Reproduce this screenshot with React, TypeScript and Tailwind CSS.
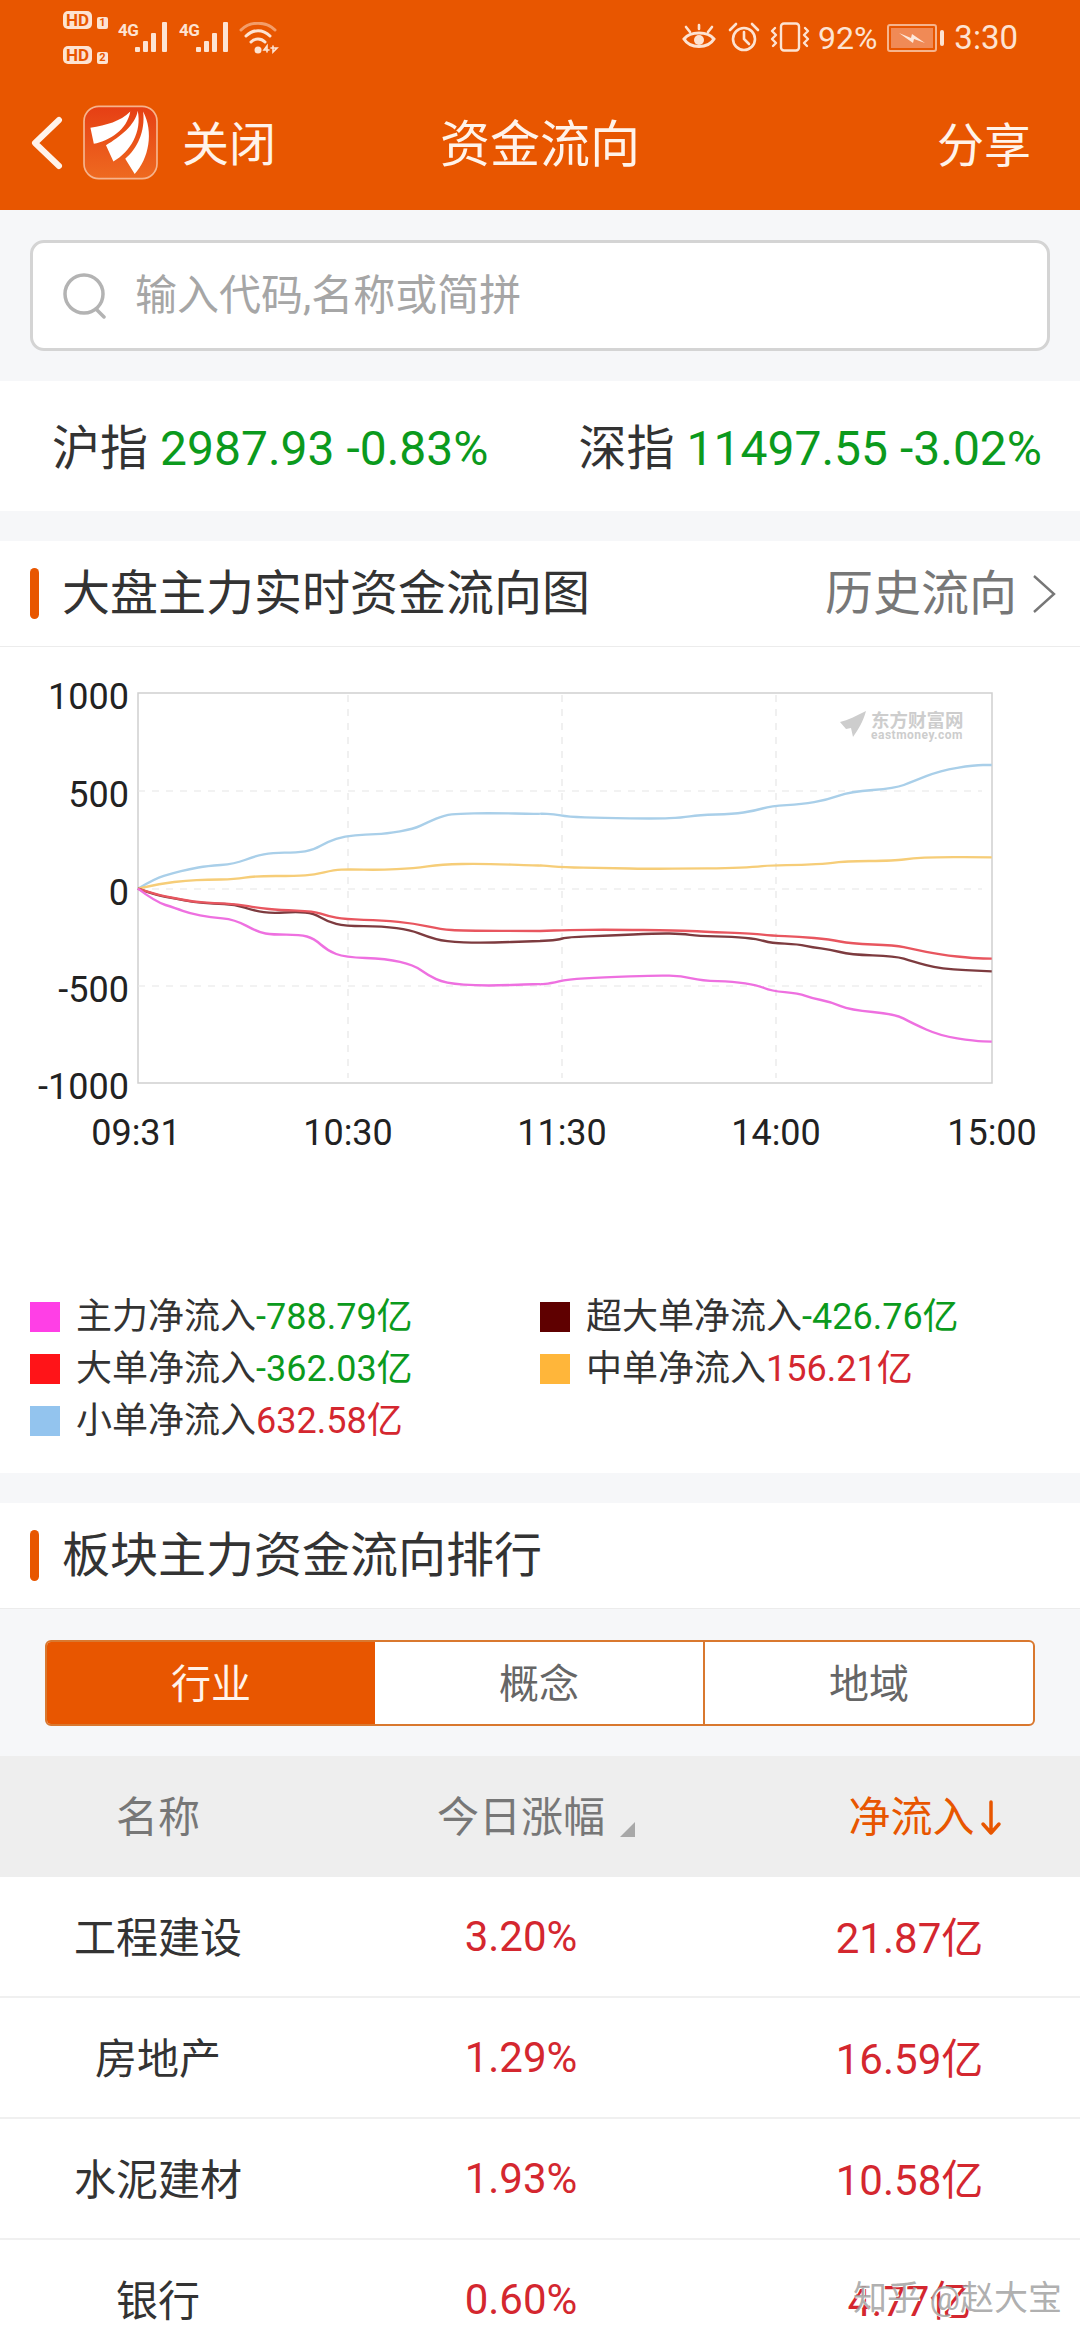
const sansFont = "[font-family:Roboto,'Noto_Sans_CJK_SC',sans-serif]";

type Pt = [number, number];

// chart traces, sampled off the picture: left half then right half (x offset 540)
const toPage = (pts: Pt[], offset: number): Pt[] =>
  pts.map(([x, y]) => [offset + x / 2.9, 660 + y / 3]);

const smooth = (pts: Pt[]) => {
  let d = `M${pts[0][0]} ${pts[0][1]}`;
  for (let i = 1; i < pts.length - 1; i++) {
    const mx = (pts[i][0] + pts[i + 1][0]) / 2;
    const my = (pts[i][1] + pts[i + 1][1]) / 2;
    d += ` Q${pts[i][0]} ${pts[i][1]} ${mx} ${my}`;
  }
  const last = pts[pts.length - 1];
  return d + ` L${last[0]} ${last[1]}`;
};

const traces: { color: string; left: Pt[]; right: Pt[] }[] = [
  {
    color: "#a9cfe9",
    left: [[400,686],[450,655],[500,640],[550,627],[600,618],[680,612],[740,588],[790,578],[860,578],[910,570],[950,545],[1000,528],[1060,524],[1120,521],[1200,507],[1240,487],[1290,465],[1330,461],[1420,459],[1566,462]],
    right: [[0,461],[40,462],[80,470],[180,474],[340,476],[410,473],[460,465],[560,462],[620,453],[670,438],[760,433],[830,420],[900,395],[1030,385],[1080,365],[1160,332],[1260,315],[1310,315]],
  },
  {
    color: "#f6cd78",
    left: [[400,686],[470,670],[540,662],[600,659],[680,658],[740,648],[860,648],[910,644],[970,630],[1010,628],[1100,630],[1200,625],[1280,613],[1400,611],[1566,617]],
    right: [[0,616],[70,622],[180,624],[340,627],[430,625],[540,625],[620,621],[670,616],[760,615],[840,610],[880,604],[1030,602],[1080,595],[1150,591],[1310,592]],
  },
  {
    color: "#7d3b3f",
    left: [[400,686],[450,705],[510,716],[560,726],[620,731],[680,733],[740,753],[790,760],[860,755],[910,760],[950,785],[1000,798],[1110,799],[1190,810],[1240,830],[1290,845],[1400,849],[1566,843]],
    right: [[0,843],[50,840],[80,831],[200,827],[340,820],[410,821],[460,828],[560,830],[630,837],[670,849],[750,853],[790,862],[840,868],[900,884],[1030,888],[1080,904],[1160,927],[1310,934]],
  },
  {
    color: "#e8565f",
    left: [[400,686],[450,703],[510,715],[560,725],[620,729],[690,733],[750,744],[810,750],[910,754],[950,768],[1000,778],[1110,781],[1200,790],[1280,808],[1340,812],[1566,813]],
    right: [[0,813],[80,810],[200,809],[400,811],[470,815],[620,821],[670,827],[750,830],[840,838],[900,851],[1030,856],[1080,867],[1160,884],[1260,895],[1310,896]],
  },
  {
    color: "#ee70e0",
    left: [[400,686],[450,725],[510,745],[550,760],[610,772],[680,778],[750,817],[790,824],[870,824],[910,835],[950,872],[1000,892],[1120,896],[1200,915],[1240,945],[1290,970],[1400,978],[1566,972]],
    right: [[0,973],[30,970],[80,958],[180,952],[340,946],[410,948],[470,962],[560,965],[630,975],[670,993],[750,1000],[790,1015],[840,1025],[900,1050],[1030,1062],[1080,1090],[1160,1127],[1260,1143],[1310,1145]],
  },
];

const legend = [
  { swatch: "bg-[#ff3fe6]", label: "主力净流入", value: "-788.79亿", up: false },
  { swatch: "bg-[#5f0000]", label: "超大单净流入", value: "-426.76亿", up: false },
  { swatch: "bg-[#ff1418]", label: "大单净流入", value: "-362.03亿", up: false },
  { swatch: "bg-[#ffb63a]", label: "中单净流入", value: "156.21亿", up: true },
  { swatch: "bg-[#93c4ee]", label: "小单净流入", value: "632.58亿", up: true },
];

const rows = [
  { name: "工程建设", change: "3.20%", flow: "21.87亿" },
  { name: "房地产", change: "1.29%", flow: "16.59亿" },
  { name: "水泥建材", change: "1.93%", flow: "10.58亿" },
  { name: "银行", change: "0.60%", flow: "4.77亿" },
];

function HdBadge({ n }: { n: string }) {
  return (
    <div className="flex items-end gap-[5px] h-[18px]">
      <span className="w-[29px] h-[18px] rounded-[5px] bg-[#fde3d2] text-[#e85600] text-[17px] leading-[18px] font-bold text-center">HD</span>
      <span className="w-[11px] h-[12px] rounded-[2px] bg-[#fde3d2] text-[#e85600] text-[11px] leading-[12px] font-bold text-center">{n}</span>
    </div>
  );
}

function Signal() {
  return (
    <div className="flex items-start">
      <span className="w-[18px] text-[17px] leading-[14px] mt-[1px] font-bold text-[#fde3d2] tracking-[-0.5px]">4G</span>
      <svg width="34" height="30" viewBox="0 0 34 30" fill="#fde3d2" className="ml-[-1px]">
        <rect x="0" y="25" width="5" height="5" rx="1" />
        <rect x="8" y="19" width="5" height="11" rx="1" />
        <rect x="16" y="11" width="5" height="19" rx="1" />
        <rect x="27" y="0" width="5" height="30" rx="1" />
      </svg>
    </div>
  );
}

function StatusBar() {
  return (
    <div className="h-[80px] flex justify-between pl-[63px] pr-[62px] pt-[11px] text-[#fde3d2]">
      <div className="flex items-start">
        <div className="flex flex-col gap-[17px] w-[55px]">
          <HdBadge n="1" />
          <HdBadge n="2" />
        </div>
        <div className="flex gap-[10px] mt-[11px]">
          <Signal />
          <Signal />
        </div>
        <svg width="40" height="32" viewBox="0 0 40 32" fill="none" stroke="#fde3d2" strokeLinecap="round" className="ml-[9px] mt-[11px]">
          <path d="M2 8C11 -1 27 -1 36 8" strokeWidth="3" opacity="0.5" />
          <path d="M7 14C14 7 24 7 31 14" strokeWidth="3" />
          <path d="M12 20C16 16 22 16 26 20" strokeWidth="3" />
          <circle cx="19" cy="28" r="3.5" fill="#fde3d2" stroke="none" />
          <path d="M28 30V24L25 28H30" strokeWidth="1.6" />
          <path d="M34 24V30L38 26H32" strokeWidth="1.6" />
        </svg>
      </div>
      <div className="flex items-start">
        <svg width="34" height="28" viewBox="0 0 34 28" fill="none" stroke="#fde3d2" strokeWidth="3" strokeLinecap="round" className="mt-[12px]">
          <path d="M2 16C8 8 26 8 32 16C26 26 8 26 2 16Z" />
          <circle cx="17" cy="17" r="5" fill="#fde3d2" stroke="none" />
          <path d="M4 4L8 9M30 4L26 9M17 2V6" strokeWidth="2.6" />
        </svg>
        <svg width="32" height="30" viewBox="0 0 32 30" fill="none" stroke="#fde3d2" strokeWidth="2.6" strokeLinecap="round" className="ml-[12px] mt-[11px]">
          <circle cx="16" cy="17" r="11" />
          <path d="M16 10V17L21 22" />
          <path d="M2 8L8 2M30 8L24 2" />
        </svg>
        <svg width="40" height="30" viewBox="0 0 40 30" fill="none" stroke="#fde3d2" strokeWidth="2.4" strokeLinecap="round" strokeLinejoin="round" className="ml-[10px] mt-[11px]">
          <rect x="11" y="1.5" width="18" height="27" rx="3" />
          <path d="M5 6L2 9L6 13L2 17L6 21L3 24" />
          <path d="M35 6L38 9L34 13L38 17L34 21L37 24" />
        </svg>
        <span className="ml-[8px] mt-[8px] text-[32px] leading-[38px]">92%</span>
        <div className="ml-[10px] mt-[13px] flex items-center">
          <div className="w-[50px] h-[28px] rounded-[3px] border-2 border-[#f6b48d] p-[2px]">
            <svg viewBox="0 0 42 20" className="w-full h-full block" preserveAspectRatio="none">
              <rect width="42" height="20" fill="#f08a56" />
              <path d="M8 5L20 10L21 6L34 15L23 11L22 15Z" fill="#fde9dc" />
            </svg>
          </div>
          <div className="w-[4px] h-[16px] ml-[3px] rounded-[2px] bg-[#fde3d2]" />
        </div>
        <span className="ml-[10px] mt-[8px] text-[33px] leading-[38px]">3:30</span>
      </div>
    </div>
  );
}

function AppLogo() {
  return (
    <svg width="75" height="75" viewBox="190 32 222 220" className="block">
      <defs>
        <linearGradient id="logoFill" x1="0" y1="0" x2="0" y2="1">
          <stop offset="0" stopColor="#e63f14" />
          <stop offset="1" stopColor="#ee6a20" />
        </linearGradient>
      </defs>
      <rect x="193" y="35" width="216" height="214" rx="44" fill="url(#logoFill)" stroke="#f6b48d" strokeWidth="5" />
      <path d="M330 50C300 80 260 90 212 98L222 146C270 135 320 105 330 50Z" fill="#fff" />
      <path d="M352 48C345 90 300 125 258 150L280 198C330 170 365 110 352 48Z" fill="#fff" />
      <path d="M368 50C375 110 350 160 315 190L343 235C385 190 400 110 368 50Z" fill="#fff" />
    </svg>
  );
}

function Header() {
  return (
    <header className="h-[210px] bg-[#e85600] text-[#fff3ea]">
      <StatusBar />
      <div className="h-[130px] grid grid-cols-[1fr_auto_1fr] items-start px-[30px] pt-[25px]">
        <div className="flex items-center h-[75px]">
          <svg width="34" height="54" viewBox="0 0 34 54" fill="none" stroke="#fff3ea" strokeWidth="6" strokeLinecap="round" strokeLinejoin="round">
            <path d="M29 4L5 27L29 50" />
          </svg>
          <div className="ml-[19px]">
            <AppLogo />
          </div>
          <span className="ml-[24px] text-[47px] leading-[75px] pt-[3px]">关闭</span>
        </div>
        <span className="text-[50px] leading-[75px] pt-[3px]">资金流向</span>
        <span className="text-[47px] leading-[75px] text-right mr-[19px] pt-[3px]">分享</span>
      </div>
    </header>
  );
}

function SearchBar() {
  return (
    <div className="h-[171px] pt-[30px] px-[30px]">
      <div className="h-[111px] rounded-[14px] border-[3px] border-[#d4d4d4] bg-white flex items-center pl-[29px]">
        <svg width="46" height="46" viewBox="0 0 46 46" fill="none" stroke="#b3b3b3" strokeWidth="3.5" strokeLinecap="round">
          <circle cx="22" cy="21" r="19" />
          <path d="M34 36L42 44" />
        </svg>
        <span className="ml-[27px] text-[42px] text-[#a6a6a6]">输入代码,名称或简拼</span>
      </div>
    </div>
  );
}

function IndexRow({ name, price, change }: { name: string; price: string; change: string }) {
  return (
    <div className="flex items-center gap-[12px] whitespace-nowrap">
      <span className="text-[#333] text-[48px]">{name}</span>
      <span className="text-[#0b9a1d] text-[48px]">{price} {change}</span>
    </div>
  );
}

function SectionTitle({ title, children }: { title: string; children?: React.ReactNode }) {
  return (
    <div className="h-[106px] bg-white border-b border-[#ececec] flex items-center pl-[30px]">
      <div className="w-[9px] h-[51px] rounded-full bg-[#e85600]" />
      <span className="ml-[23px] text-[48px] text-[#333]">{title}</span>
      {children}
    </div>
  );
}

function FlowChart() {
  const ticks = [
    { y: 693, label: "1000" },
    { y: 791, label: "500" },
    { y: 889, label: "0" },
    { y: 986, label: "-500" },
    { y: 1083, label: "-1000" },
  ];
  const times = [
    { x: 136, label: "09:31" },
    { x: 348, label: "10:30" },
    { x: 562, label: "11:30" },
    { x: 776, label: "14:00" },
    { x: 992, label: "15:00" },
  ];
  return (
    <svg width="1080" height="644" viewBox="0 647 1080 644" className="block" fontSize="36" fill="#222">
      <rect x="138" y="693" width="854" height="390" fill="none" stroke="#cfcfcf" strokeWidth="1.5" />
      <g stroke="#e6e6e6" strokeWidth="1.2" strokeDasharray="7 7" fill="none">
        <path d="M138 791H982M138 889H982M138 986H982" />
        <path d="M348 695V1078M562 695V1078M776 695V1078" />
      </g>
      {ticks.map((t) => (
        <text key={t.label} x="129" y={t.y + 16} textAnchor="end">{t.label}</text>
      ))}
      {times.map((t) => (
        <text key={t.label} x={t.x} y="1145" textAnchor="middle">{t.label}</text>
      ))}
      {/* watermark */}
      <g fill="#cdcdcd">
        <path d="M840 722C848 720 856 716 866 711C863 722 858 730 853 737L851 728L846 729Z" />
        <text x="871" y="727" fontSize="18.5" fontWeight="700" className="[font-family:'Noto_Sans_CJK_SC',sans-serif]">东方财富网</text>
        <text x="871" y="739" fontSize="12" fontWeight="700" letterSpacing="0.5">eastmoney.com</text>
      </g>
      {traces.map((t) => (
        <path
          key={t.color}
          d={smooth([...toPage(t.left, 0), ...toPage(t.right, 540)])}
          fill="none"
          stroke={t.color}
          strokeWidth="2.4"
          strokeLinejoin="round"
        />
      ))}
    </svg>
  );
}

function Legend() {
  return (
    <div className="grid grid-cols-[510px_1fr] pl-[30px] pb-[26px]">
      {legend.map((item) => (
        <div key={item.label} className="h-[52px] flex items-center text-[36px] whitespace-nowrap">
          <div className={`w-[30px] h-[30px] ${item.swatch}`} />
          <span className="ml-[16px] text-[#333]">{item.label}</span>
          <span className={item.up ? "text-[#d4272f]" : "text-[#0b9a1d]"}>{item.value}</span>
        </div>
      ))}
    </div>
  );
}

function Tabs() {
  return (
    <div className="h-[147px] pt-[31px] px-[45px]">
      <div className="h-[86px] grid grid-cols-[328px_330px_1fr] rounded-[6px] border-2 border-[#d9782f] bg-white overflow-hidden text-[40px] text-[#666]">
        <div className="bg-[#e85600] text-[#fff3ea] flex items-center justify-center pt-[3px]">行业</div>
        <div className="border-r-2 border-[#d9782f] flex items-center justify-center pt-[3px]">概念</div>
        <div className="flex items-center justify-center pt-[3px]">地域</div>
      </div>
    </div>
  );
}

function FlowTable() {
  return (
    <div>
      <div className="h-[121px] bg-[#eeeeee] grid grid-cols-[316px_410px_354px] items-center text-[42px] text-[#777] pt-[2px]">
        <span className="text-center">名称</span>
        <div className="flex justify-center relative">
          <span>今日涨幅</span>
          <svg width="15" height="15" viewBox="0 0 15 15" className="absolute left-[304px] top-[36px]">
            <path d="M15 0V15H0Z" fill="#a8a8a8" />
          </svg>
        </div>
        <div className="flex justify-center items-center pl-[44px] text-[#e85600]">
          <span>净流入</span>
          <svg width="22" height="36" viewBox="0 0 22 36" fill="none" stroke="#e85600" strokeWidth="3.5" strokeLinecap="round" strokeLinejoin="round" className="ml-[5px]">
            <path d="M11 2V33M3 24L11 33L19 24" />
          </svg>
        </div>
      </div>
      {rows.map((row) => (
        <div key={row.name} className="h-[121px] bg-white border-b-2 border-[#f0f0f0] grid grid-cols-[316px_410px_354px] items-center text-[42px] pt-[4px]">
          <span className="text-center text-[#333]">{row.name}</span>
          <span className="text-center text-[#d4272f] mb-[4px]">{row.change}</span>
          <span className="text-center text-[#d4272f] pl-[13px]">{row.flow}</span>
        </div>
      ))}
    </div>
  );
}

export default function App() {
  return (
    <div className={`relative w-[1080px] h-[2340px] overflow-hidden bg-[#f6f7f9] ${sansFont}`}>
      <Header />
      <SearchBar />
      <div className="h-[130px] bg-white flex items-center justify-between pl-[52px] pr-[38px] pt-[6px] mb-[30px]">
        <IndexRow name="沪指" price="2987.93" change="-0.83%" />
        <IndexRow name="深指" price="11497.55" change="-3.02%" />
      </div>
      <section className="bg-white mb-[30px]">
        <SectionTitle title="大盘主力实时资金流向图">
          <span className="ml-auto text-[48px] text-[#777]">历史流向</span>
          <svg width="24" height="38" viewBox="0 0 24 38" fill="none" stroke="#777" strokeWidth="2.4" className="ml-[15px] mr-[24px]">
            <path d="M2 1L22 19L2 37" />
          </svg>
        </SectionTitle>
        <FlowChart />
        <Legend />
      </section>
      <SectionTitle title="板块主力资金流向排行" />
      <Tabs />
      <FlowTable />
      {/* site watermark over the last row */}
      <div className="absolute left-[853px] top-[2273px] text-[34px] text-[#9a9a9a]/80 whitespace-nowrap [text-shadow:1px_1px_0_#fff]">知乎 @赵大宝</div>
    </div>
  );
}
